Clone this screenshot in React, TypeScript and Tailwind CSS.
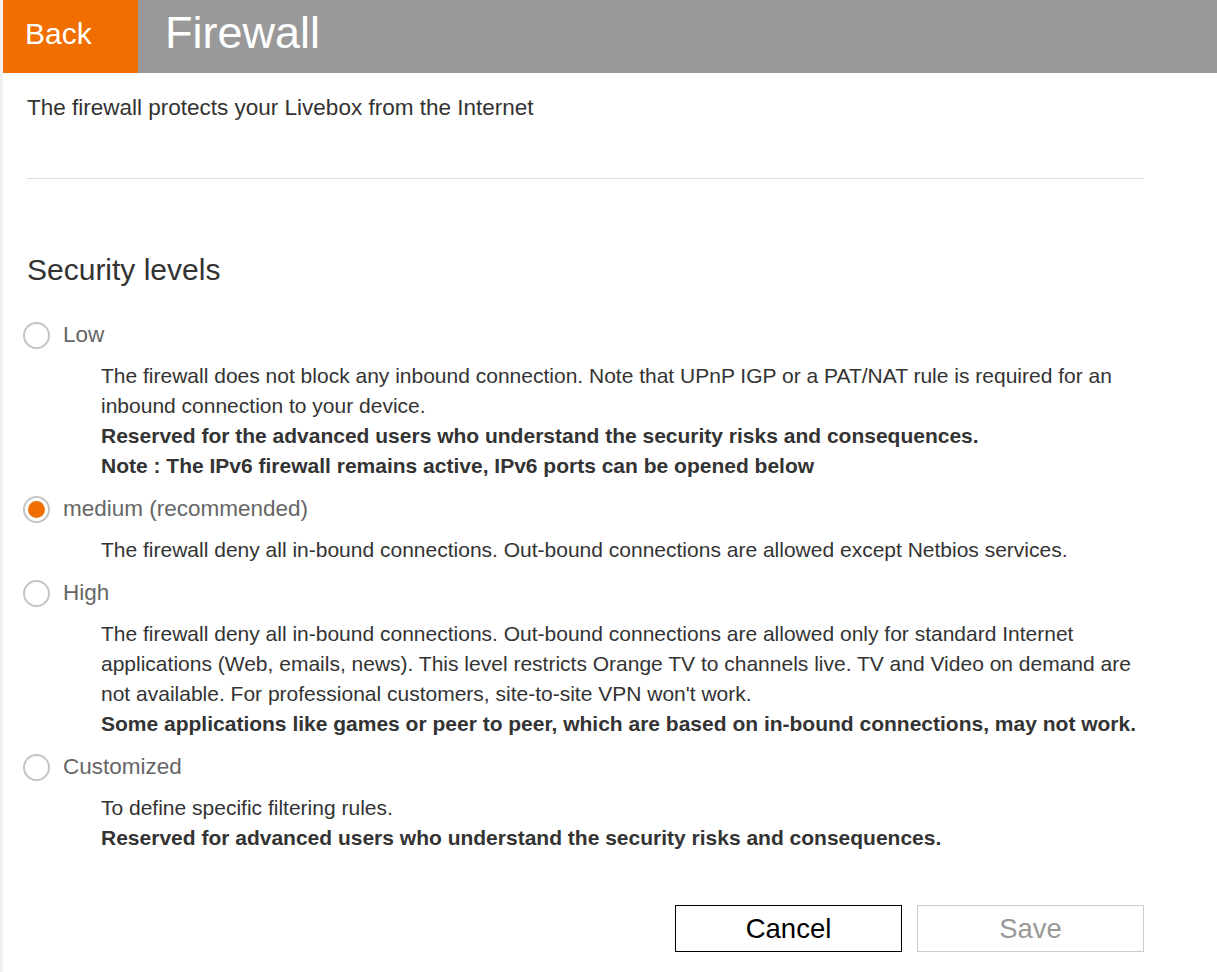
import { useState } from "react";

type Level = {
  id: string;
  label: string;
  lines: { text: string; bold?: boolean }[];
};

const levels: Level[] = [
  {
    id: "low",
    label: "Low",
    lines: [
      {
        text: "The firewall does not block any inbound connection. Note that UPnP IGP or a PAT/NAT rule is required for an",
      },
      { text: "inbound connection to your device." },
      {
        text: "Reserved for the advanced users who understand the security risks and consequences.",
        bold: true,
      },
      {
        text: "Note : The IPv6 firewall remains active, IPv6 ports can be opened below",
        bold: true,
      },
    ],
  },
  {
    id: "medium",
    label: "medium (recommended)",
    lines: [
      {
        text: "The firewall deny all in-bound connections. Out-bound connections are allowed except Netbios services.",
      },
    ],
  },
  {
    id: "high",
    label: "High",
    lines: [
      {
        text: "The firewall deny all in-bound connections. Out-bound connections are allowed only for standard Internet",
      },
      {
        text: "applications (Web, emails, news). This level restricts Orange TV to channels live. TV and Video on demand are",
      },
      { text: "not available. For professional customers, site-to-site VPN won't work." },
      {
        text: "Some applications like games or peer to peer, which are based on in-bound connections, may not work.",
        bold: true,
      },
    ],
  },
  {
    id: "custom",
    label: "Customized",
    lines: [
      { text: "To define specific filtering rules." },
      {
        text: "Reserved for advanced users who understand the security risks and consequences.",
        bold: true,
      },
    ],
  },
];

function Radio({ checked }: { checked: boolean }) {
  return (
    <span className="flex h-[27px] w-[27px] shrink-0 items-center justify-center rounded-full border-2 border-[#c4c4c4] bg-white">
      {checked && <span className="h-[17px] w-[17px] rounded-full bg-[#f16e00]" />}
    </span>
  );
}

export default function App() {
  const [level, setLevel] = useState("medium");

  return (
    <div className="min-h-[972px] bg-[#f2f2f2] pl-[3px] font-['Liberation_Sans',Arial,sans-serif]">
      <div className="min-h-[972px] bg-white">
        {/* header */}
        <div className="flex h-[73px] bg-[#999999] text-white">
          <button className="flex h-full w-[135px] items-center bg-[#f16e00] pb-[6px] pl-[22px] text-[30px]">
            Back
          </button>
          <h1 className="flex items-center pb-[8px] pl-[27px] text-[45px] leading-none">Firewall</h1>
        </div>

        <div className="w-[1141px] pl-[24px] pt-[21px]">
          <p className="text-[22.5px] leading-[28px] text-[#333]">
            The firewall protects your Livebox from the Internet
          </p>
          <div className="mt-[56px] h-px bg-[#dddddd]" />

          <h2 className="mt-[73px] text-[30px] leading-[36px] text-[#333]">Security levels</h2>

          <div className="mt-[32px] -ml-[4px]">
            {levels.map((lvl, i) => (
              <div key={lvl.id} className={i > 0 ? "mt-[13px]" : ""}>
                <label
                  className="flex h-[30px] cursor-pointer items-center gap-[13px]"
                  onClick={() => setLevel(lvl.id)}
                >
                  <Radio checked={level === lvl.id} />
                  <span className="text-[22.5px] leading-[30px] text-[#666]">{lvl.label}</span>
                </label>
                <div className="mt-[11px] pl-[78px] text-[21px] leading-[30px] text-[#333]">
                  {lvl.lines.map((l, j) => (
                    <div key={j} className={`whitespace-nowrap ${l.bold ? "font-bold" : ""}`}>
                      {l.text}
                    </div>
                  ))}
                </div>
              </div>
            ))}
          </div>

          <div className="mt-[52px] flex justify-end gap-[15px] pb-[20px]">
            <button className="h-[47px] w-[227px] border border-black bg-white text-[27.5px] text-black">
              Cancel
            </button>
            <button
              disabled
              className="h-[47px] w-[227px] border border-[#cccccc] bg-white text-[27.5px] text-[#999]"
            >
              Save
            </button>
          </div>
        </div>
      </div>
    </div>
  );
}
